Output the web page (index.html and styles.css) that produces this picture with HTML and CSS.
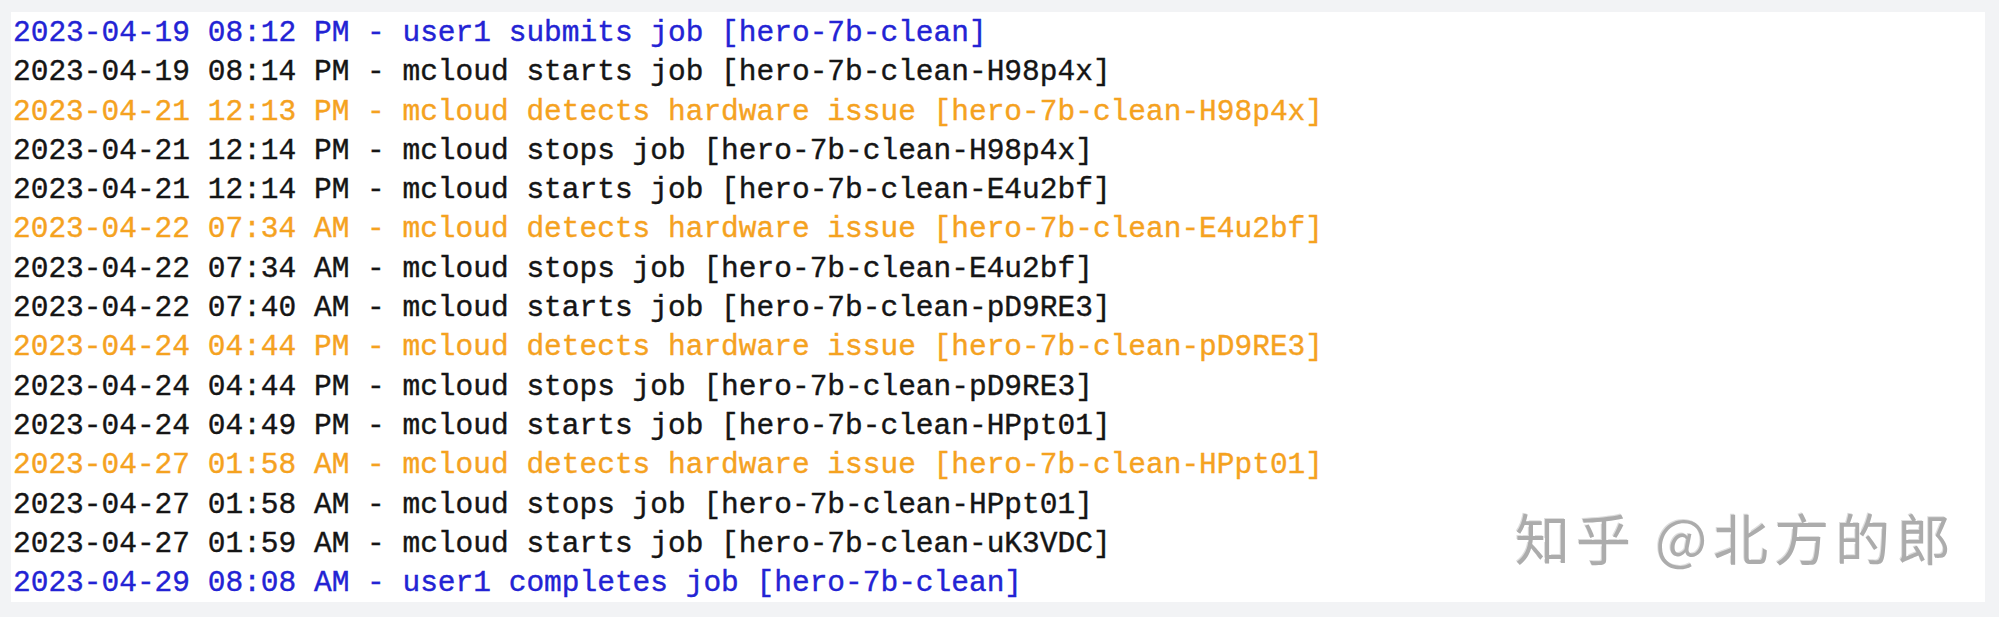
FILE: index.html
```html
<!DOCTYPE html>
<html lang="en">
<head>
<meta charset="utf-8">
<title>Job log</title>
<link rel="stylesheet" href="styles.css">
</head>
<body>
<div class="page">
  <div class="panel">
    <div class="log">
      <div class="line user">2023-04-19 08:12 PM - user1 submits job [hero-7b-clean]</div>
      <div class="line">2023-04-19 08:14 PM - mcloud starts job [hero-7b-clean-H98p4x]</div>
      <div class="line warn">2023-04-21 12:13 PM - mcloud detects hardware issue [hero-7b-clean-H98p4x]</div>
      <div class="line">2023-04-21 12:14 PM - mcloud stops job [hero-7b-clean-H98p4x]</div>
      <div class="line">2023-04-21 12:14 PM - mcloud starts job [hero-7b-clean-E4u2bf]</div>
      <div class="line warn">2023-04-22 07:34 AM - mcloud detects hardware issue [hero-7b-clean-E4u2bf]</div>
      <div class="line">2023-04-22 07:34 AM - mcloud stops job [hero-7b-clean-E4u2bf]</div>
      <div class="line">2023-04-22 07:40 AM - mcloud starts job [hero-7b-clean-pD9RE3]</div>
      <div class="line warn">2023-04-24 04:44 PM - mcloud detects hardware issue [hero-7b-clean-pD9RE3]</div>
      <div class="line">2023-04-24 04:44 PM - mcloud stops job [hero-7b-clean-pD9RE3]</div>
      <div class="line">2023-04-24 04:49 PM - mcloud starts job [hero-7b-clean-HPpt01]</div>
      <div class="line warn">2023-04-27 01:58 AM - mcloud detects hardware issue [hero-7b-clean-HPpt01]</div>
      <div class="line">2023-04-27 01:58 AM - mcloud stops job [hero-7b-clean-HPpt01]</div>
      <div class="line">2023-04-27 01:59 AM - mcloud starts job [hero-7b-clean-uK3VDC]</div>
      <div class="line user">2023-04-29 08:08 AM - user1 completes job [hero-7b-clean]</div>
    </div>
    <div class="watermark">知乎 @北方的郎</div>
  </div>
</div>
</body>
</html>
```

FILE: styles.css
```css
html, body {
  margin: 0;
  padding: 0;
  background: #f2f3f5;
}

.page {
  width: 1999px;
  height: 617px;
  padding: 12px 14px 15px 11px;
  box-sizing: border-box;
}

.panel {
  position: relative;
  background: #ffffff;
  height: 590px;
  padding: 2px 0 0 2px;
  box-sizing: border-box;
}

.log {
  font-family: "Liberation Mono", "DejaVu Sans Mono", monospace;
  font-size: 29.5px;
  line-height: 39.3px;
  color: #151515;
}

.line {
  white-space: pre;
  -webkit-text-stroke: 0.4px currentColor;
}

.line.user {
  color: #2323d4;
}

.line.warn {
  color: #f5a21f;
}

.watermark {
  position: absolute;
  left: 1504px;
  top: 484px;
  font-family: "Noto Sans CJK SC", sans-serif;
  font-size: 55px;
  letter-spacing: 6px;
  color: #acacac;
  text-shadow: 2px 2px 0 rgba(255, 255, 255, 0.9), -1px -1px 0 rgba(120, 120, 120, 0.25);
  white-space: nowrap;
}
```
